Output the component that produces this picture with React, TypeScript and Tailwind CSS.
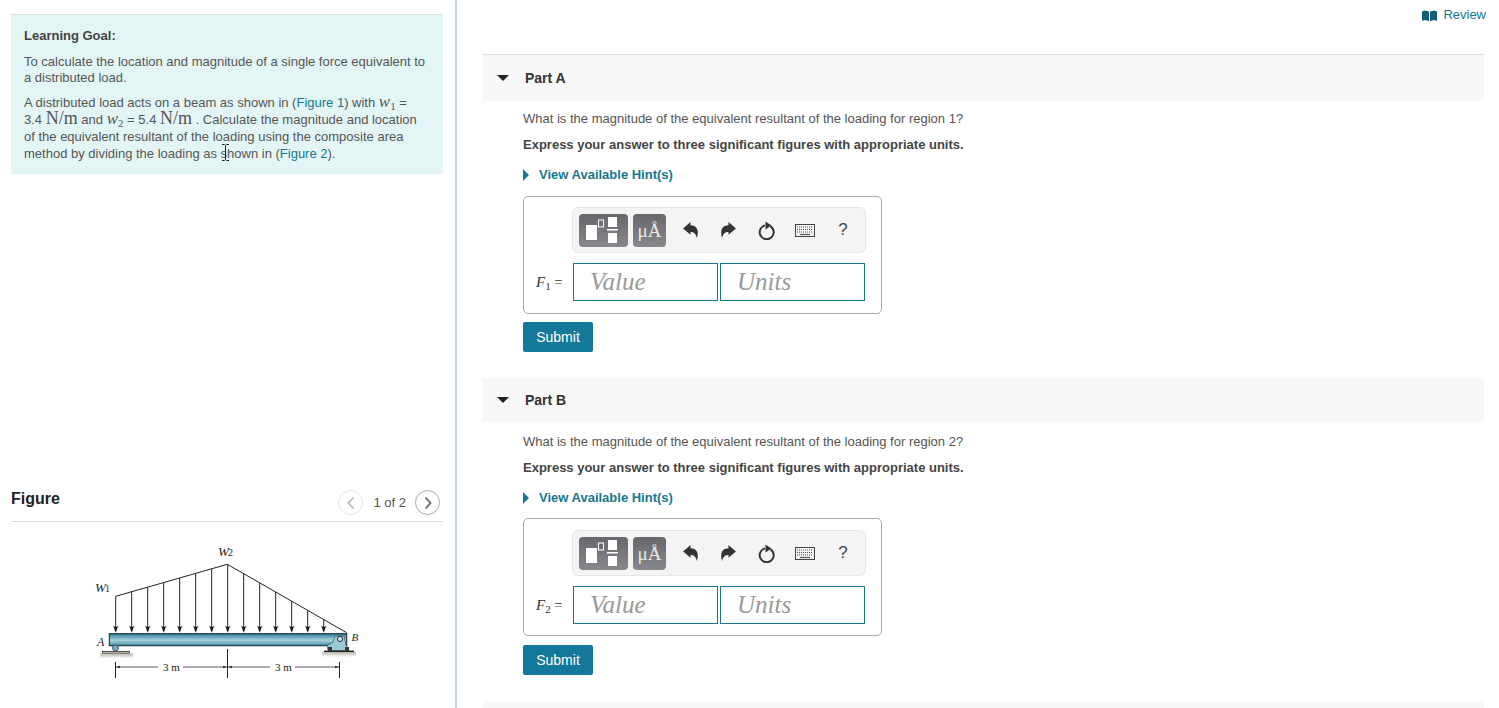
const sans = 'font-["Liberation_Sans",Arial,sans-serif]';
const serif = 'font-["Liberation_Serif","Times_New_Roman",serif]';

function MatrixIcon() {
  return (
    <svg width="49" height="33" viewBox="0 0 49 33" fill="none">
      <rect x="7" y="11" width="11" height="15" fill="#fff" />
      <rect x="19.5" y="6" width="5" height="7" stroke="#fff" strokeWidth="1" />
      <rect x="29" y="3" width="9" height="10" fill="#fff" />
      <rect x="28" y="15" width="11" height="1.5" fill="#fff" />
      <rect x="29" y="19" width="9" height="10" fill="#fff" />
    </svg>
  );
}

function ArrowIcon({ flip }: { flip?: boolean }) {
  return (
    <svg width="17" height="18" viewBox="0 0 16 16" className={flip ? '-scale-x-100' : ''}>
      <path d="M1 6.500 8 .5V3.500C13.500 3.500 16.500 8 14 15.500 13 11.500 11.500 9.800 8 9.800V12.500Z" fill="#333" />
    </svg>
  );
}

function ResetIcon() {
  return (
    <svg width="20" height="20" viewBox="0 0 20 20" fill="none">
      <path d="M13.500 6.300A7 7 0 1 1 8 5.400" stroke="#333" strokeWidth="2" />
      <path d="M8.500 1.500 14.500 5.500 8.500 9.500Z" fill="#333" />
    </svg>
  );
}

function KeyboardIcon() {
  return (
    <svg width="20" height="13" viewBox="0 0 20 13" fill="none">
      <rect x="0.5" y="0.5" width="19" height="12" fill="#f4f4f4" stroke="#444" />
      <path d="M2 3h16M2 5.500h16M2 8h16" stroke="#555" strokeWidth="1.2" strokeDasharray="1 1" />
      <path d="M5 10.500h10" stroke="#555" strokeWidth="1.2" />
    </svg>
  );
}

function BeamFigure() {
  const arrows = [45.7, 61.7, 77.7, 93.7, 109.7, 125.7, 141.7, 157.7, 173.7, 189.7, 205.7, 221.7, 237.7, 253.7];
  const topAt = (x: number) =>
    x <= 157.3 ? 61.3 - ((x - 45.7) / 111.6) * 32 : 29.3 + ((x - 157.3) / 119.4) * 68.4;

  return (
    <svg width="300" height="173" viewBox="0 0 300 173" className="block">
      <defs>
        <linearGradient id="beam" x1="0" y1="0" x2="0" y2="1">
          <stop offset="0" stopColor="#2f7f9b" />
          <stop offset="0.55" stopColor="#a9d3df" />
          <stop offset="1" stopColor="#3f8aa3" />
        </linearGradient>
        <linearGradient id="ground" x1="0" y1="0" x2="0" y2="1">
          <stop offset="0" stopColor="#b5b5a8" />
          <stop offset="1" stopColor="#ffffff" />
        </linearGradient>
      </defs>

      <path d="M45.7 61.300 157.300 29.300 276.700 97.700" fill="none" stroke="#222" strokeWidth="1" />
      {arrows.map((x) => (
        <g key={x}>
          <line x1={x} y1={topAt(x)} x2={x} y2="94" stroke="#222" strokeWidth="1" />
          <path d={`M${x - 2.6} 90.5 L${x} 97.8 L${x + 2.6} 90.5 L${x} 92.500Z`} fill="#111" />
        </g>
      ))}

      <rect x="39.3" y="98.7" width="237.4" height="12" fill="url(#beam)" stroke="#10222a" strokeWidth="1" />

      {/* rocker at A */}
      <circle cx="45.5" cy="113" r="3" fill="#6fb0c4" stroke="#2c5060" strokeWidth="0.8" />
      <rect x="32.5" y="116.3" width="27" height="2.2" fill="#a8a89c" stroke="#222" strokeWidth="0.7" />
      <rect x="30" y="118.5" width="33" height="5" fill="url(#ground)" />

      {/* pin at B */}
      <path d="M257 110.700 L263 107 L265 101 H274 L276 110 L279 115.500 H258Z" fill="#9ccbd8" stroke="#33505c" strokeWidth="0.7" />
      <circle cx="270" cy="104" r="2.600" fill="#c9e3ea" stroke="#222" strokeWidth="0.9" />
      <rect x="258" y="112" width="4" height="3.500" fill="#333" />
      <rect x="275" y="112" width="4" height="3.500" fill="#333" />
      <rect x="254" y="115.600" width="30" height="1.400" fill="#222" />
      <rect x="252" y="117" width="34" height="5" fill="url(#ground)" />

      <line x1="45.5" y1="127" x2="45.5" y2="143" stroke="#222" strokeWidth="1" />
      <line x1="157.5" y1="114" x2="157.5" y2="143" stroke="#222" strokeWidth="1" />
      <line x1="269.5" y1="127" x2="269.5" y2="143" stroke="#222" strokeWidth="1" />
      <path d="M46 132H88M113 132H157M158 132H200M225 132H269" stroke="#333" strokeWidth="0.8" />
      <path d="M46 132l4-1.200v2.400ZM157 132l-4-1.200v2.400ZM158 132l4-1.200v2.400ZM269 132l-4-1.200v2.400Z" fill="#333" />

      <g fontFamily="'Liberation Serif', serif" fill="#222">
        <text x="93" y="136" fontSize="11">3 m</text>
        <text x="205" y="136" fontSize="11">3 m</text>
        <text x="25" y="57" fontSize="13" fontStyle="italic">W</text>
        <text x="35" y="57" fontSize="10">1</text>
        <text x="148" y="21" fontSize="13" fontStyle="italic">W</text>
        <text x="158" y="21" fontSize="10">2</text>
        <text x="27" y="111" fontSize="12" fontStyle="italic">A</text>
        <text x="281.500" y="106" fontSize="11" fontStyle="italic">B</text>
      </g>
    </svg>
  );
}

function AnswerBox({ sub, first }: { sub: string; first?: boolean }) {
  return (
    <div className={`w-[359px] h-[118px] border border-[#aaaaaa] rounded-[5px] pl-[12px] ${first ? 'pt-[10px]' : 'pt-[11px]'}`}>
      <div className="ml-[36px] w-[294px] h-[46px] bg-[#f4f4f4] border border-[#e6e6e6] rounded-[6px] flex items-center pl-[6px]">
        <div className="w-[49px] h-[33px] rounded-[4px] bg-gradient-to-b from-[#68686c] to-[#88888c] flex items-center justify-center">
          <MatrixIcon />
        </div>
        <div className={`ml-[5px] w-[33px] h-[33px] rounded-[4px] bg-gradient-to-b from-[#68686c] to-[#88888c] text-[#e8e8e8] flex items-center justify-center text-[19px] leading-none ${serif}`}>
          μÅ
        </div>
        <div className="ml-[5px] flex items-center text-[#333333]">
          <span className="w-[38px] flex justify-center"><ArrowIcon /></span>
          <span className="w-[38px] flex justify-center"><ArrowIcon flip /></span>
          <span className="w-[39px] pl-[1px] flex justify-center"><ResetIcon /></span>
          <span className="w-[38px] flex justify-center"><KeyboardIcon /></span>
          <span className="w-[38px] flex justify-center text-[17px] text-[#444444]">?</span>
        </div>
      </div>
      <div className="mt-[10px] flex items-center">
        <div className={`w-[37px] text-[15px] text-[#333333] whitespace-nowrap ${serif}`}>
          <i>F</i><sub className="text-[11px]">{sub}</sub> <span className="text-[14px]">=</span>
        </div>
        <div className={`w-[145px] h-[38px] border border-[#14788f] pl-[16px] flex items-center italic text-[25px] text-[#999999] ${serif}`}>
          Value
        </div>
        <div className={`ml-[2px] w-[145px] h-[38px] border border-[#14788f] pl-[16px] flex items-center italic text-[25px] text-[#999999] ${serif}`}>
          Units
        </div>
      </div>
    </div>
  );
}

function PartSection({ name, region, sub, first }: { name: string; region: number; sub: string; first?: boolean }) {
  return (
    <section>
      <div className={`${first ? 'h-[46px]' : 'h-[44px]'} bg-[#f8f8f8] flex items-center`}>
        <span className="ml-[14px] w-0 h-0 border-x-[6px] border-x-transparent border-t-[6px] border-t-[#222222]" />
        <h2 className="ml-[16px] text-[14px] font-bold text-[#333333]">{name}</h2>
      </div>
      <div className={`pl-[40px] pb-[26px] ${first ? 'pt-[8px]' : 'pt-[10px]'}`}>
        <p className="text-[13px] leading-[20px] text-[#555555]">
          What is the magnitude of the equivalent resultant of the loading for region {region}?
        </p>
        <p className="mt-[6px] text-[13px] leading-[20px] font-bold text-[#444444]">
          Express your answer to three significant figures with appropriate units.
        </p>
        <div className="mt-[10px] h-[20px] flex items-center text-[13px] font-bold text-[#14788f]">
          <span className="w-0 h-0 border-y-[6px] border-y-transparent border-l-[6px] border-l-[#14788f]" />
          <span className="ml-[10px]">View Available Hint(s)</span>
        </div>
        <div className={first ? 'mt-[11px]' : 'mt-[10px]'}>
          <AnswerBox sub={sub} first={first} />
        </div>
        <button className={`${first ? 'mt-[8px]' : 'mt-[9px]'} w-[70px] h-[30px] rounded-[2px] bg-[#14789a] text-white text-[14px] flex items-center justify-center`}>
          Submit
        </button>
      </div>
    </section>
  );
}

export default function App() {
  return (
    <div className={`h-[708px] w-[1499px] overflow-hidden flex bg-white ${sans}`}>
      <aside className="w-[457px] shrink-0 border-r-2 border-[#c3d3e0] pl-[11px] pr-[12px] pt-[14px] flex flex-col relative">
        <div className="w-[432px] h-[160px] bg-[#e4f5f6] border-t border-[#d8e4e4] pl-[13px] pr-[16px] pt-[13px] text-[13px] leading-[16px] text-[#555555]">
          <p className="font-bold text-[#444444] leading-[16px]">Learning Goal:</p>
          <p className="mt-[10px]">
            To calculate the location and magnitude of a single force equivalent to a distributed load.
          </p>
          <p className="mt-[8px] leading-[17px]">
            A distributed load acts on a beam as shown in (<span className="text-[#14788f]">Figure 1</span>) with{' '}
            <i className={`${serif} text-[17px] inline-block leading-[12px]`}>w</i><sub className={`${serif} text-[11px]`}>1</sub> = 3.4{' '}
            <span className={`${serif} text-[18px] inline-block leading-[12px]`}>N/m</span> and{' '}
            <i className={`${serif} text-[17px] inline-block leading-[12px]`}>w</i><sub className={`${serif} text-[11px]`}>2</sub> = 5.4{' '}
            <span className={`${serif} text-[18px] inline-block leading-[12px]`}>N/m</span> . Calculate the magnitude and location of the equivalent resultant of the loading using the composite area method by dividing the loading as shown in (<span className="text-[#14788f]">Figure 2</span>).
          </p>
        </div>

        <div className="mt-[315px] w-[432px] h-[33px] border-b border-[#dddddd] flex items-start justify-between">
          <h2 className="text-[16px] leading-[20px] font-bold text-[#222222]">Figure</h2>
          <div className="flex items-center pr-[3px] pt-[1px] text-[13px] text-[#555555]">
            <span className="w-[25px] h-[25px] rounded-full border border-[#e6e6e6] flex items-center justify-center">
              <svg width="10" height="14" viewBox="0 0 10 14" fill="none">
                <path d="M7.500 1.500 2.500 7 7.500 12.500" stroke="#bbbbbb" strokeWidth="1.8" />
              </svg>
            </span>
            <span className="ml-[10px] mr-[9px]">1 of 2</span>
            <span className="w-[25px] h-[25px] rounded-full border border-[#aaaaaa] flex items-center justify-center">
              <svg width="10" height="14" viewBox="0 0 10 14" fill="none">
                <path d="M2.500 1.500 7.500 7 2.500 12.500" stroke="#666666" strokeWidth="1.8" />
              </svg>
            </span>
          </div>
        </div>
        <div className="mt-[13px] ml-[59px]">
          <BeamFigure />
        </div>

        {/* text cursor caught in the capture */}
        <svg width="9" height="17" viewBox="0 0 9 17" className="absolute left-[221px] top-[144px]" fill="none">
          <path d="M1 .5h2.500L4.500 1.500 5.500.5H8M4.500 1.500v14M1 16.500h2.500l1-1 1 1H8" stroke="#222" strokeWidth="1" />
        </svg>
      </aside>

      <main className="flex-1 min-w-0 pl-[26px] pr-[15px]">
        <div className="h-[55px] border-b border-[#dddddd] pt-[7px] flex justify-end">
          <div className="h-[16px] -mr-[2px] flex items-center text-[13px] text-[#14788f]">
            <svg width="15" height="11" viewBox="0 0 15 11" className="mr-[6px]">
              <path d="M0 1.500 2.500.5 7 1.500V11L2.500 10 0 11ZM8 1.500 12.500.5 15 1.500V11L12.500 10 8 11Z" fill="#0f5f78" />
            </svg>
            Review
          </div>
        </div>
        <PartSection name="Part A" region={1} sub="1" first />
        <PartSection name="Part B" region={2} sub="2" />
        <div className="h-[20px] bg-[#f8f8f8]" />
      </main>
    </div>
  );
}
